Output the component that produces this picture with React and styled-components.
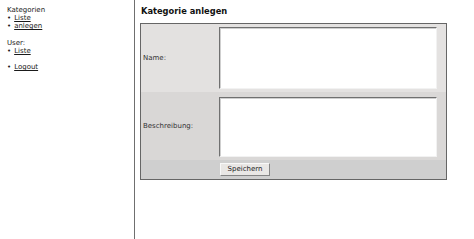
import React from "react";
import styled, { createGlobalStyle } from "styled-components";

const Global = createGlobalStyle`
  html, body {
    margin: 0;
    padding: 0;
    background: #ffffff;
    font-family: "DejaVu Sans", Verdana, sans-serif;
    color: #1a1a1a;
  }
`;

const Page = styled.div`
  display: flex;
  width: 474px;
  height: 239px;
  overflow: hidden;
`;

const Sidebar = styled.nav`
  width: 135px;
  flex-shrink: 0;
  border-right: 1px solid #6f6f6f;
  padding: 6px 0 0 7px;
  box-sizing: border-box;
  font-size: 7px;
  line-height: 8px;
`;

const Group = styled.div`
  margin-bottom: ${(p) => p.$gap || 9}px;
`;

const Menu = styled.ul`
  list-style: none;
  margin: 0;
  padding: 0;
`;

const Item = styled.li`
  display: flex;
  gap: 3px;
  &::before {
    content: "•";
  }
`;

const MenuLink = styled.a`
  color: #1a1a1a;
  text-decoration: underline;
`;

const Main = styled.main`
  flex: 1;
  padding: 6px 0 0 5px;
`;

const Title = styled.h1`
  margin: 0 0 7px 1px;
  font-size: 8.3px;
  line-height: 10px;
  font-weight: bold;
  color: #111;
`;

const Form = styled.form`
  width: 307px;
  box-sizing: border-box;
  border: 1px solid #666;
  display: grid;
  grid-template-columns: 78px 1fr;
`;

const Label = styled.label`
  display: flex;
  align-items: center;
  padding-left: 2px;
  height: ${(p) => p.$h}px;
  font-size: 7px;
  background: ${(p) => p.$bg};
  color: #333;
`;

const Field = styled.div`
  height: ${(p) => p.$h}px;
  padding: ${(p) => p.$top}px 9px 0 0;
  box-sizing: border-box;
  background: ${(p) => p.$bg};
`;

const Area = styled.textarea`
  display: block;
  width: 100%;
  height: ${(p) => p.$h}px;
  box-sizing: border-box;
  margin: 0;
  padding: 0;
  resize: none;
  background: #fff;
  border: 1px solid;
  border-color: #707070 #f2f2f2 #f2f2f2 #707070;
  box-shadow: inset 1px 1px 0 #cfcfcf;
  outline: none;
`;

const ButtonRow = styled.div`
  grid-column: 1 / 3;
  display: flex;
  align-items: flex-start;
  height: 19px;
  padding: 3px 0 0 79px;
  box-sizing: border-box;
  background: #cfcfcf;
`;

const Button = styled.button`
  width: 50px;
  height: 13px;
  padding: 0;
  font-family: "DejaVu Sans", Verdana, sans-serif;
  font-size: 7px;
  line-height: 11px;
  color: #222;
  background: #e9e7e5;
  border: 1px solid;
  border-color: #f8f8f8 #858585 #858585 #f8f8f8;
`;

export default function App() {
  return (
    <>
      <Global />
      <Page>
        <Sidebar>
          <Group>
            Kategorien
            <Menu>
              <Item><MenuLink href="#">Liste</MenuLink></Item>
              <Item><MenuLink href="#">anlegen</MenuLink></Item>
            </Menu>
          </Group>
          <Group $gap={8}>
            User:
            <Menu>
              <Item><MenuLink href="#">Liste</MenuLink></Item>
            </Menu>
          </Group>
          <Menu>
            <Item><MenuLink href="#">Logout</MenuLink></Item>
          </Menu>
        </Sidebar>
        <Main>
          <Title>Kategorie anlegen</Title>
          <Form onSubmit={(e) => e.preventDefault()}>
            <Label $h={68} $bg="#e3e1e0">Name:</Label>
            <Field $h={68} $top={3} $bg="#e4e2e1">
              <Area $h={62} />
            </Field>
            <Label $h={68} $bg="#d9d7d6">Beschreibung:</Label>
            <Field $h={68} $top={5} $bg="#dad8d7">
              <Area $h={60} />
            </Field>
            <ButtonRow>
              <Button type="submit">Speichern</Button>
            </ButtonRow>
          </Form>
        </Main>
      </Page>
    </>
  );
}
